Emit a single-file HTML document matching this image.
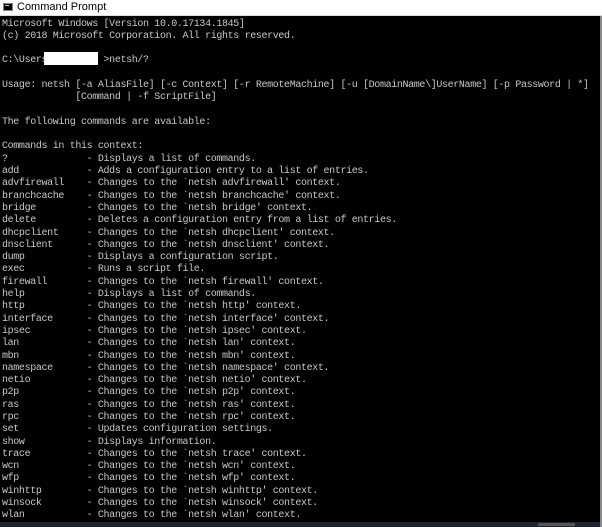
<!DOCTYPE html><html><head><style>
body{margin:0;width:602px;height:527px;background:#000;overflow:hidden;position:relative;font-family:"Liberation Sans",sans-serif}
.title{position:absolute;left:0;top:0;width:602px;height:16px;background:#fff;border-bottom:1px solid #ddd;box-sizing:border-box}
.title span{position:absolute;left:17px;top:1px;font-size:11px;color:#000}
.ico{position:absolute;left:3px;top:3px;width:10px;height:8px;background:#000;border:1px solid #888;box-sizing:border-box}
.ico:after{content:"";position:absolute;left:1px;top:1px;width:4px;height:1px;background:#ccc}
pre{position:absolute;left:2px;top:18.5px;margin:0;font-family:"Liberation Mono",monospace;font-size:10px;letter-spacing:-0.36px;line-height:12.3px;color:#c8c8c8}
.red{position:absolute;left:44px;top:52px;width:54px;height:13px;background:#fff}
.sb{position:absolute;left:0;top:522px;width:602px;height:5px;background:#1d2430}
.sb i{position:absolute;left:538px;top:1px;width:37px;height:3px;background:#555}
.rb{position:absolute;right:0;top:16px;width:2px;height:511px;background:#8a8a8a}
</style></head><body>
<div class="title"><div class="ico"></div><span>Command Prompt</span></div>
<pre>Microsoft Windows [Version 10.0.17134.1845]
(c) 2018 Microsoft Corporation. All rights reserved.

C:\Users          >netsh/?

Usage: netsh [-a AliasFile] [-c Context] [-r RemoteMachine] [-u [DomainName\]UserName] [-p Password | *]
             [Command | -f ScriptFile]

The following commands are available:

Commands in this context:
?              - Displays a list of commands.
add            - Adds a configuration entry to a list of entries.
advfirewall    - Changes to the `netsh advfirewall' context.
branchcache    - Changes to the `netsh branchcache' context.
bridge         - Changes to the `netsh bridge' context.
delete         - Deletes a configuration entry from a list of entries.
dhcpclient     - Changes to the `netsh dhcpclient' context.
dnsclient      - Changes to the `netsh dnsclient' context.
dump           - Displays a configuration script.
exec           - Runs a script file.
firewall       - Changes to the `netsh firewall' context.
help           - Displays a list of commands.
http           - Changes to the `netsh http' context.
interface      - Changes to the `netsh interface' context.
ipsec          - Changes to the `netsh ipsec' context.
lan            - Changes to the `netsh lan' context.
mbn            - Changes to the `netsh mbn' context.
namespace      - Changes to the `netsh namespace' context.
netio          - Changes to the `netsh netio' context.
p2p            - Changes to the `netsh p2p' context.
ras            - Changes to the `netsh ras' context.
rpc            - Changes to the `netsh rpc' context.
set            - Updates configuration settings.
show           - Displays information.
trace          - Changes to the `netsh trace' context.
wcn            - Changes to the `netsh wcn' context.
wfp            - Changes to the `netsh wfp' context.
winhttp        - Changes to the `netsh winhttp' context.
winsock        - Changes to the `netsh winsock' context.
wlan           - Changes to the `netsh wlan' context.</pre>
<div class="red"></div>
<div class="sb"><i></i></div>
<div class="rb"></div>
</body></html>
